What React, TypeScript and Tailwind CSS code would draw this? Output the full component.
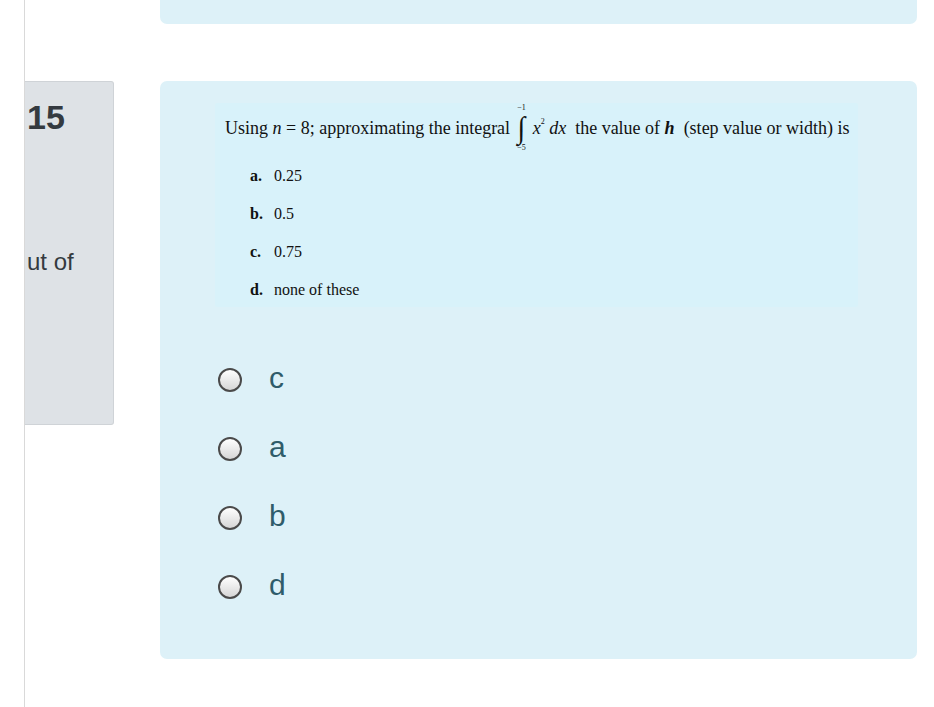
const serif = { fontFamily: '"Liberation Serif", "Times New Roman", serif' };

const choices = [
  { label: 'a.', value: '0.25' },
  { label: 'b.', value: '0.5' },
  { label: 'c.', value: '0.75' },
  { label: 'd.', value: 'none of these' },
];

const answers = ['c', 'a', 'b', 'd'];

function Integral() {
  return (
    <span className="inline-flex flex-col items-center mx-[7px]" style={serif}>
      <span className="text-[8px] h-[10px] leading-[10px]">−1</span>
      <span className="text-[28px] h-[30px] leading-[30px] scale-y-[1.1]">∫</span>
      <span className="text-[8px] h-[10px] leading-[10px]">−5</span>
    </span>
  );
}

export default function App() {
  return (
    <div className="w-[934px] h-[707px] bg-white pl-[24px] overflow-hidden font-['Liberation_Sans',Arial,sans-serif]">
      <div className="h-full border-l border-[#d9d9d9] flex flex-col">
        <div className="flex">
          <div className="w-[135px] shrink-0" />
          <div className="w-[757px] h-[24px] bg-[#ddf1f8] rounded-b-[7px]" />
        </div>

        <div className="flex mt-[57px]">
          <div className="w-[89px] h-[344px] shrink-0 bg-[#dee2e6] border border-l-0 border-[#cfd3d7] rounded-r-[3px] overflow-hidden pl-[2px] text-[#343a40]">
            <div className="text-[34px] font-bold leading-none mt-[18px]">15</div>
            <div className="text-[24px] leading-none mt-[116px] whitespace-nowrap">ut of</div>
          </div>

          <div className="ml-[46px] w-[757px] h-[578px] bg-[#ddf1f8] rounded-[7px] pt-[22px] pl-[55px]">
            <div className="w-[643px] h-[204px] bg-[#d8f2fa] rounded-[2px] pl-[10px] text-[#111]" style={serif}>
              <p className="text-[18px] leading-none flex items-center whitespace-nowrap">
                <span>Using&nbsp;</span>
                <i>n</i>
                <span>&nbsp;= 8; approximating the integral</span>
                <Integral />
                <i>x</i>
                <sup className="text-[8px] -top-[6px] not-italic">2</sup>
                <i>&nbsp;dx</i>
                <span>&nbsp;&nbsp;the value of&nbsp;</span>
                <b><i>h</i></b>
                <span>&nbsp; (step value or width) is</span>
              </p>
              <ul className="mt-[14px] pl-[25px] flex flex-col gap-[21px]">
                {choices.map((c) => (
                  <li key={c.label} className="flex text-[16px] leading-[17px]">
                    <b className="w-[24px]">{c.label}</b>
                    <span>{c.value}</span>
                  </li>
                ))}
              </ul>
            </div>

            <div className="mt-[54px] flex flex-col gap-[32px] pl-[3px]">
              {answers.map((a) => (
                <label key={a} className="flex items-center h-[37px]">
                  <span className="w-[24px] h-[24px] rounded-full border-2 border-[#4a4a4a] bg-gradient-to-b from-white to-[#d6d6d6]" />
                  <span className="ml-[27px] text-[30px] leading-none text-[#2f5c6a] -mt-[4px]">{a}</span>
                </label>
              ))}
            </div>
          </div>
        </div>
      </div>
    </div>
  );
}
